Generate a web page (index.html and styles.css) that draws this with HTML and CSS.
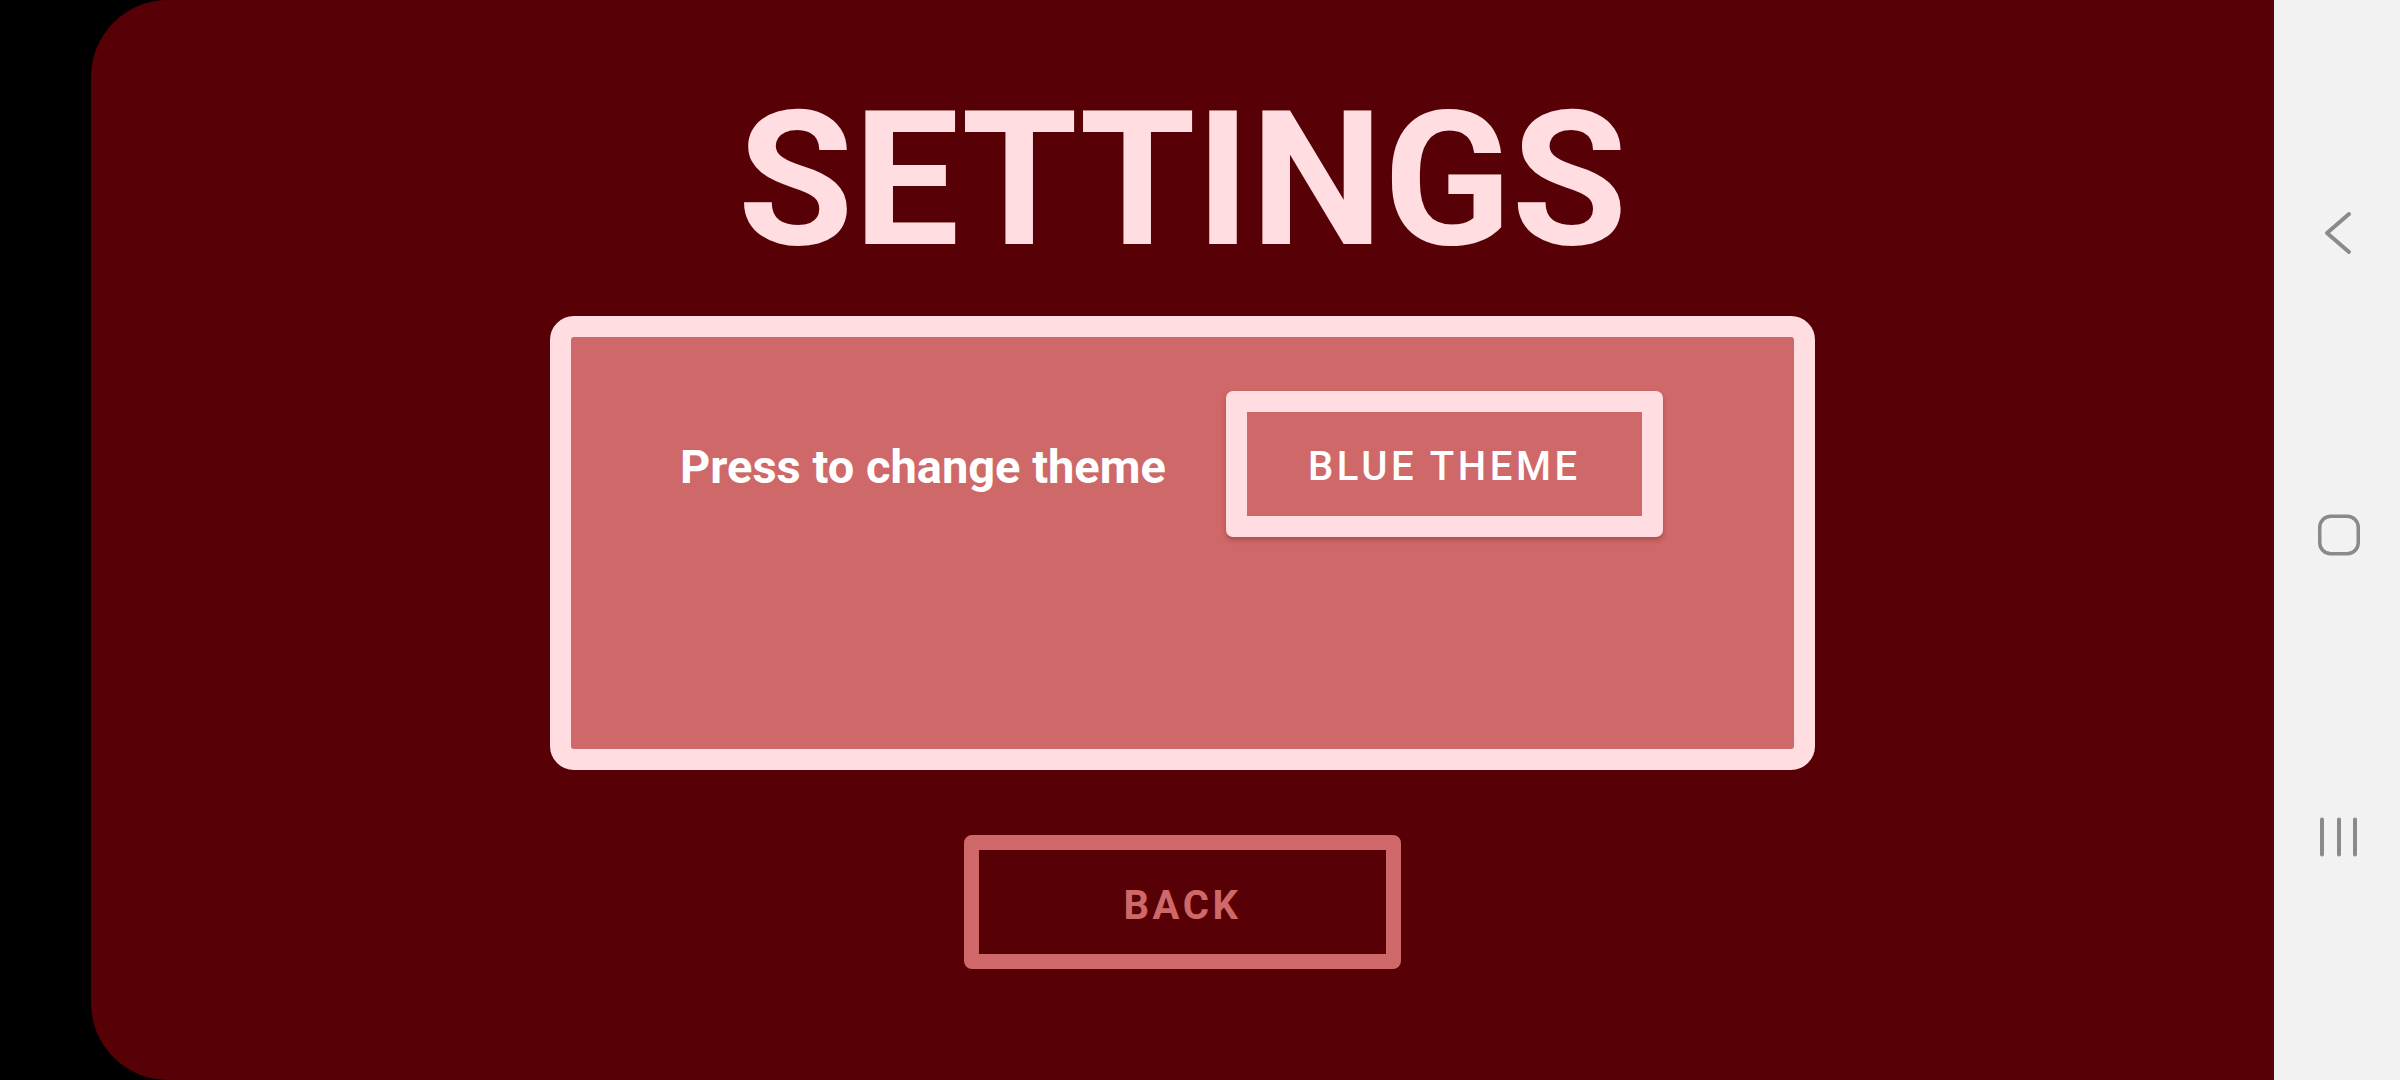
FILE: index.html
```html
<!DOCTYPE html>
<html>
<head>
<meta charset="utf-8">
<link rel="stylesheet" href="styles.css">
</head>
<body>
<div class="screen">
  <div class="cutout"></div>
  <main class="panel">
    <h1 class="title">SETTINGS</h1>
    <section class="card">
      <div class="row">
        <span class="label">Press to change theme</span>
        <button class="theme-btn">BLUE THEME</button>
      </div>
    </section>
    <button class="back-btn">BACK</button>
  </main>
  <nav class="navbar">
    <svg class="nav-icon" viewBox="0 0 60 60" width="60" height="60">
      <polyline points="42,11 20,30 42,49" fill="none" stroke="#8a8a8a" stroke-width="4" stroke-linecap="round" stroke-linejoin="round"/>
    </svg>
    <svg class="nav-icon" viewBox="0 0 60 60" width="60" height="60">
      <rect x="12.75" y="11.25" width="38.5" height="37.5" rx="11" fill="none" stroke="#8a8a8a" stroke-width="3.5"/>
    </svg>
    <svg class="nav-icon" viewBox="0 0 60 60" width="60" height="60">
      <g stroke="#8a8a8a" stroke-width="4" stroke-linecap="round">
        <line x1="15" y1="12.5" x2="15" y2="47.5"/>
        <line x1="32" y1="12.5" x2="32" y2="47.5"/>
        <line x1="48" y1="12.5" x2="48" y2="47.5"/>
      </g>
    </svg>
  </nav>
</div>
</body>
</html>
```
FILE: styles.css
```css
* { box-sizing: border-box; }
html, body {
  margin: 0;
  padding: 0;
  width: 2400px;
  height: 1080px;
  overflow: hidden;
  background: #000;
  font-family: Roboto, "Liberation Sans", sans-serif;
}
.screen {
  display: flex;
  width: 2400px;
  height: 1080px;
}
.cutout {
  width: 91px;
  flex: none;
  background: #000;
}
.panel {
  flex: 1;
  background: #570005;
  border-radius: 77px 0 0 77px;
  display: flex;
  flex-direction: column;
  align-items: center;
  padding-top: 86px;
}
.title {
  margin: 0;
  font-size: 188px;
  line-height: 188px;
  font-weight: 700;
  color: #ffdde1;
}
.card {
  margin-top: 42px;
  width: 1265px;
  height: 454px;
  border: 21px solid #ffdde1;
  border-radius: 24px;
  background: #cf6868;
  padding: 54px 0 0 109px;
}
.row {
  display: flex;
  align-items: center;
  gap: 60px;
}
.label {
  font-size: 47px;
  font-weight: 700;
  color: #ffffff;
  position: relative;
  top: 2px;
}
.theme-btn {
  width: 437px;
  height: 146px;
  border: 21px solid #ffdde1;
  border-radius: 7px;
  background: #cf6868;
  color: #ffffff;
  font-family: Roboto, "Liberation Sans", sans-serif;
  font-size: 40px;
  font-weight: 500;
  letter-spacing: 0.09em;
  padding: 4px 0 0 0;
  box-shadow: 0 3px 5px rgba(60, 0, 0, 0.25);
}
.back-btn {
  margin-top: 65px;
  width: 437px;
  height: 134px;
  border: 15px solid #cf6868;
  border-radius: 8px;
  background: transparent;
  color: #cf6868;
  font-family: Roboto, "Liberation Sans", sans-serif;
  font-size: 40px;
  font-weight: 700;
  letter-spacing: 0.09em;
  padding: 6px 0 0 0;
}
.navbar {
  width: 126px;
  flex: none;
  background: #f2f2f2;
  display: flex;
  flex-direction: column;
  align-items: center;
  padding-top: 203px;
  gap: 242px;
}
.nav-icon {
  display: block;
  flex: none;
}
```
